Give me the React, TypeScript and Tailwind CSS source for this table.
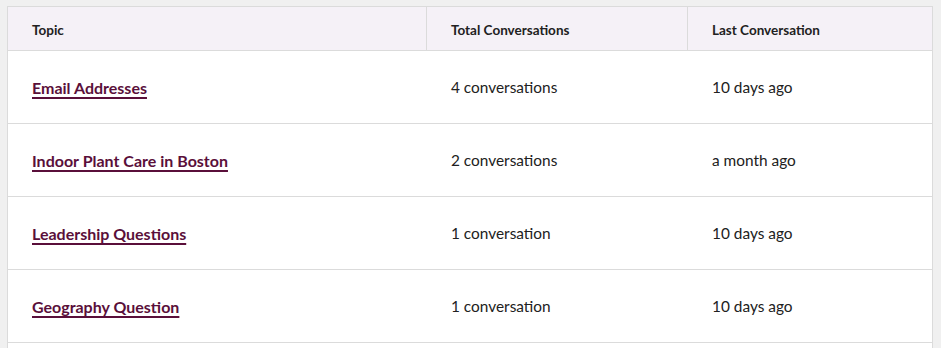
import React from "react";

const rows = [
  { topic: "Email Addresses", total: "4 conversations", last: "10 days ago" },
  { topic: "Indoor Plant Care in Boston", total: "2 conversations", last: "a month ago" },
  { topic: "Leadership Questions", total: "1 conversation", last: "10 days ago" },
  { topic: "Geography Question", total: "1 conversation", last: "10 days ago" },
];

export default function App() {
  return (
    <div
      className="w-[941px] h-[348px] overflow-hidden bg-[#f0f0f0] pl-[7px] pt-[6px]"
      style={{ fontFamily: "Lato, 'Noto Sans', sans-serif" }}
    >
      <div className="w-[926px] border border-[#dbdbdb] bg-white">
        <div className="flex h-[44px] bg-[#f5f1f7] border-b border-[#dbdbdb] text-[13.5px] font-bold text-[#212121]">
          <div className="w-[419px] shrink-0 flex items-center pt-[3px] px-6 border-r border-[#dbdbdb]">Topic</div>
          <div className="w-[261px] shrink-0 flex items-center pt-[3px] px-6 border-r border-[#dbdbdb]">Total Conversations</div>
          <div className="flex-1 flex items-center pt-[3px] px-6">Last Conversation</div>
        </div>
        {rows.map((r) => (
          <div key={r.topic} className="flex h-[73px] border-b border-[#dbdbdb] text-[15.4px] text-[#212121]">
            <div className="w-[419px] shrink-0 flex items-center pt-[2px] px-6">
              <a href="#" className="text-[16px] font-bold text-[#5a0f3a] underline underline-offset-[3px] decoration-[1.5px]">
                {r.topic}
              </a>
            </div>
            <div className="w-[261px] shrink-0 flex items-center pt-[2px] px-6">{r.total}</div>
            <div className="flex-1 flex items-center pt-[2px] px-6">{r.last}</div>
          </div>
        ))}
        <div className="h-[73px]" />
      </div>
    </div>
  );
}
